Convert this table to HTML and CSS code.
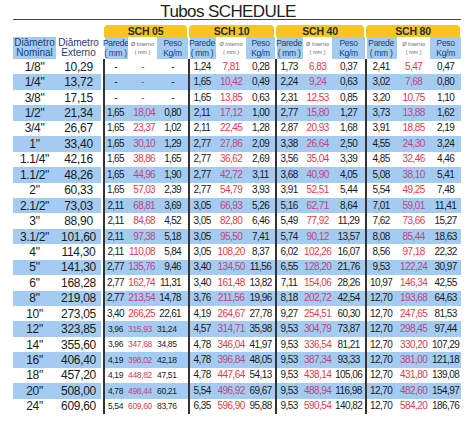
FILE: index.html
```html
<!DOCTYPE html>
<html lang="pt">
<head>
  <meta charset="UTF-8">
  <title>Tubos SCHEDULE</title>
  <link rel="stylesheet" href="styles.css">
</head>
<body>
  <h1 class="title">Tubos SCHEDULE</h1>
  <table class="sched">
    <colgroup>
      <col style="width:43px"><col style="width:45px"><col style="width:2px">
      <col style="width:25px"><col style="width:29px"><col style="width:31px">
      <col style="width:28px"><col style="width:30px"><col style="width:29px">
      <col style="width:28px"><col style="width:29px"><col style="width:33px">
      <col style="width:32px"><col style="width:33px"><col style="width:31px">
    </colgroup>
    <thead>
      <tr class="tabs">
        <th colspan="3"></th>
        <th colspan="3"><div class="tab">SCH 05</div></th>
        <th colspan="3"><div class="tab">SCH 10</div></th>
        <th colspan="3"><div class="tab">SCH 40</div></th>
        <th colspan="3"><div class="tab">SCH 80</div></th>
      </tr>
      <tr class="heads">
        <th class="nom">Diâmetro<br>Nominal</th>
        <th class="ext">Diâmetro<br>Externo</th>
        <th></th>
        <th class="p">Parede<br>( mm )</th><th class="i">Ø Interno<br>( mm )</th><th class="w">Peso<br>Kg/m</th>
        <th class="p">Parede<br>( mm )</th><th class="i">Ø Interno<br>( mm )</th><th class="w">Peso<br>Kg/m</th>
        <th class="p">Parede<br>( mm )</th><th class="i">Ø Interno<br>( mm )</th><th class="w">Peso<br>Kg/m</th>
        <th class="p">Parede<br>( mm )</th><th class="i">Ø Interno<br>( mm )</th><th class="w">Peso<br>Kg/m</th>
      </tr>
    </thead>
    <tbody>
      <tr class="nil"><td>1/8"</td><td>10,29</td><td></td><td>-</td><td>-</td><td>-</td><td>1,24</td><td>7,81</td><td>0,28</td><td>1,73</td><td>6,83</td><td>0,37</td><td>2,41</td><td>5,47</td><td>0,47</td></tr>
      <tr class="nil"><td>1/4"</td><td>13,72</td><td></td><td>-</td><td>-</td><td>-</td><td>1,65</td><td>10,42</td><td>0,49</td><td>2,24</td><td>9,24</td><td>0,63</td><td>3,02</td><td>7,68</td><td>0,80</td></tr>
      <tr class="nil"><td>3/8"</td><td>17,15</td><td></td><td>-</td><td>-</td><td>-</td><td>1,65</td><td>13,85</td><td>0,63</td><td>2,31</td><td>12,53</td><td>0,85</td><td>3,20</td><td>10,75</td><td>1,10</td></tr>
      <tr><td>1/2"</td><td>21,34</td><td></td><td>1,65</td><td>18,04</td><td>0,80</td><td>2,11</td><td>17,12</td><td>1,00</td><td>2,77</td><td>15,80</td><td>1,27</td><td>3,73</td><td>13,88</td><td>1,62</td></tr>
      <tr><td>3/4"</td><td>26,67</td><td></td><td>1,65</td><td>23,37</td><td>1,02</td><td>2,11</td><td>22,45</td><td>1,28</td><td>2,87</td><td>20,93</td><td>1,68</td><td>3,91</td><td>18,85</td><td>2,19</td></tr>
      <tr><td>1"</td><td>33,40</td><td></td><td>1,65</td><td>30,10</td><td>1,29</td><td>2,77</td><td>27,86</td><td>2,09</td><td>3,38</td><td>26,64</td><td>2,50</td><td>4,55</td><td>24,30</td><td>3,24</td></tr>
      <tr><td>1.1/4"</td><td>42,16</td><td></td><td>1,65</td><td>38,86</td><td>1,65</td><td>2,77</td><td>36,62</td><td>2,69</td><td>3,56</td><td>35,04</td><td>3,39</td><td>4,85</td><td>32,46</td><td>4,46</td></tr>
      <tr><td>1.1/2"</td><td>48,26</td><td></td><td>1,65</td><td>44,96</td><td>1,90</td><td>2,77</td><td>42,72</td><td>3,11</td><td>3,68</td><td>40,90</td><td>4,05</td><td>5,08</td><td>38,10</td><td>5,41</td></tr>
      <tr><td>2"</td><td>60,33</td><td></td><td>1,65</td><td>57,03</td><td>2,39</td><td>2,77</td><td>54,79</td><td>3,93</td><td>3,91</td><td>52,51</td><td>5,44</td><td>5,54</td><td>49,25</td><td>7,48</td></tr>
      <tr><td>2.1/2"</td><td>73,03</td><td></td><td>2,11</td><td>68,81</td><td>3,69</td><td>3,05</td><td>66,93</td><td>5,26</td><td>5,16</td><td>62,71</td><td>8,64</td><td>7,01</td><td>59,01</td><td>11,41</td></tr>
      <tr><td>3"</td><td>88,90</td><td></td><td>2,11</td><td>84,68</td><td>4,52</td><td>3,05</td><td>82,80</td><td>6,46</td><td>5,49</td><td>77,92</td><td>11,29</td><td>7,62</td><td>73,66</td><td>15,27</td></tr>
      <tr><td>3.1/2"</td><td>101,60</td><td></td><td>2,11</td><td>97,38</td><td>5,18</td><td>3,05</td><td>95,50</td><td>7,41</td><td>5,74</td><td>90,12</td><td>13,57</td><td>8,08</td><td>85,44</td><td>18,63</td></tr>
      <tr><td>4"</td><td>114,30</td><td></td><td>2,11</td><td>110,08</td><td>5,84</td><td>3,05</td><td>108,20</td><td>8,37</td><td>6,02</td><td>102,26</td><td>16,07</td><td>8,56</td><td>97,18</td><td>22,32</td></tr>
      <tr><td>5"</td><td>141,30</td><td></td><td>2,77</td><td>135,76</td><td>9,46</td><td>3,40</td><td>134,50</td><td>11,56</td><td>6,55</td><td>128,20</td><td>21,76</td><td>9,53</td><td>122,24</td><td>30,97</td></tr>
      <tr><td>6"</td><td>168,28</td><td></td><td>2,77</td><td>162,74</td><td>11,31</td><td>3,40</td><td>161,48</td><td>13,82</td><td>7,11</td><td>154,06</td><td>28,26</td><td>10,97</td><td>146,34</td><td>42,55</td></tr>
      <tr><td>8"</td><td>219,08</td><td></td><td>2,77</td><td>213,54</td><td>14,78</td><td>3,76</td><td>211,56</td><td>19,96</td><td>8,18</td><td>202,72</td><td>42,54</td><td>12,70</td><td>193,68</td><td>64,63</td></tr>
      <tr><td>10"</td><td>273,05</td><td></td><td>3,40</td><td>266,25</td><td>22,61</td><td>4,19</td><td>264,67</td><td>27,78</td><td>9,27</td><td>254,51</td><td>60,30</td><td>12,70</td><td>247,65</td><td>81,53</td></tr>
      <tr class="sm"><td>12"</td><td>323,85</td><td></td><td>3,96</td><td>315,93</td><td>31,24</td><td>4,57</td><td>314,71</td><td>35,98</td><td>9,53</td><td>304,79</td><td>73,87</td><td>12,70</td><td>298,45</td><td>97,44</td></tr>
      <tr class="sm"><td>14"</td><td>355,60</td><td></td><td>3,96</td><td>347,68</td><td>34,85</td><td>4,78</td><td>346,04</td><td>41,97</td><td>9,53</td><td>336,54</td><td>81,21</td><td>12,70</td><td>330,20</td><td>107,29</td></tr>
      <tr class="sm"><td>16"</td><td>406,40</td><td></td><td>4,19</td><td>398,02</td><td>42,18</td><td>4,78</td><td>396,84</td><td>48,05</td><td>9,53</td><td>387,34</td><td>93,33</td><td>12,70</td><td>381,00</td><td>121,18</td></tr>
      <tr class="sm"><td>18"</td><td>457,20</td><td></td><td>4,19</td><td>448,82</td><td>47,51</td><td>4,78</td><td>447,64</td><td>54,13</td><td>9,53</td><td>438,14</td><td>105,06</td><td>12,70</td><td>431,80</td><td>139,08</td></tr>
      <tr class="sm"><td>20"</td><td>508,00</td><td></td><td>4,78</td><td>498,44</td><td>60,21</td><td>5,54</td><td>496,92</td><td>69,67</td><td>9,53</td><td>488,94</td><td>116,98</td><td>12,70</td><td>482,60</td><td>154,97</td></tr>
      <tr class="sm"><td>24"</td><td>609,60</td><td></td><td>5,54</td><td>609,60</td><td>83,76</td><td>6,35</td><td>596,90</td><td>95,88</td><td>9,53</td><td>590,54</td><td>140,82</td><td>12,70</td><td>584,20</td><td>186,76</td></tr>
    </tbody>
  </table>
</body>
</html>
```

FILE: styles.css
```css
* { box-sizing: border-box; }
body {
  margin: 0;
  background: #fff;
  color: #1a1a1a;
  font-family: "Liberation Sans", Arial, sans-serif;
}
.title {
  margin: 0 0 0 13px;
  width: 448px;
  height: 20px;
  padding: 3px 18px 0 0;
  font-size: 17px;
  line-height: 17px;
  font-weight: normal;
  letter-spacing: -0.6px;
  text-align: center;
  color: #222;
  border-bottom: 1px solid #444;
}

/* table */
.sched {
  border-collapse: separate;
  border-spacing: 0;
  table-layout: fixed;
  width: 448px;
  margin: 5px 0 0 13px;
}
.sched th, .sched td {
  padding: 0;
  text-align: center;
  white-space: nowrap;
  overflow: hidden;
}
.tabs th { height: 12px; }
.tab {
  height: 12px;
  margin: 0 1px;
  background: #f6c625;
  border-radius: 4px 4px 0 0;
  font-size: 10.5px;
  line-height: 12px;
  font-weight: bold;
  letter-spacing: -0.2px;
  color: #2b2b2b;
}
.heads th {
  height: 22px;
  font-weight: normal;
  line-height: 10px;
  color: #1f3d72;
}
.heads .nom, .heads .ext { font-size: 10px; }
.heads .nom { background: #a4ccf2; }
.heads .p, .heads .w {
  background: #a4ccf2;
  font-size: 8.5px;
  letter-spacing: -0.3px;
}
.heads .p { box-shadow: inset 2px 0 #fff; }
.heads .i {
  font-size: 5.5px;
  line-height: 8px;
  color: #666;
}

/* rows */
.sched tbody tr { height: 15.45px; }
.sched tbody td {
  font-size: 10px;
  line-height: 1;
  letter-spacing: -0.55px;
}
.sched tbody tr:nth-child(even) td:not(:nth-child(3)) { background: #a4ccf2; }
.sched tbody td:nth-child(-n+2) {
  font-size: 12px;
  letter-spacing: -0.3px;
}
.sched tbody td:nth-child(3n+4) { box-shadow: inset 2px 0 #333; }
.sched tbody td:nth-child(3n+5) { color: #e23c4c; }
.sched tbody tr:nth-child(even) td:nth-child(3n+5) { color: #c0457e; }

/* SCH 05 group is tighter in the source sheet */
.sched tbody td:nth-child(4),
.sched tbody td:nth-child(5),
.sched tbody td:nth-child(6) {
  font-size: 10px;
  letter-spacing: -0.65px;
}
.sched tbody td:nth-child(5) { text-align: right; padding-right: 2px; }
.sched tbody td:nth-child(6) { text-align: right; padding-right: 7px; }
.sched .nil td:nth-child(5),
.sched .nil td:nth-child(6) { text-align: center; padding-right: 0; }
.sched .sm td:nth-child(4),
.sched .sm td:nth-child(5),
.sched .sm td:nth-child(6) {
  font-size: 8.5px;
  letter-spacing: -0.35px;
}
.sched .sm td:nth-child(5) { padding-right: 12px; }
.sched .sm td:nth-child(6) { padding-right: 21px; }
```
